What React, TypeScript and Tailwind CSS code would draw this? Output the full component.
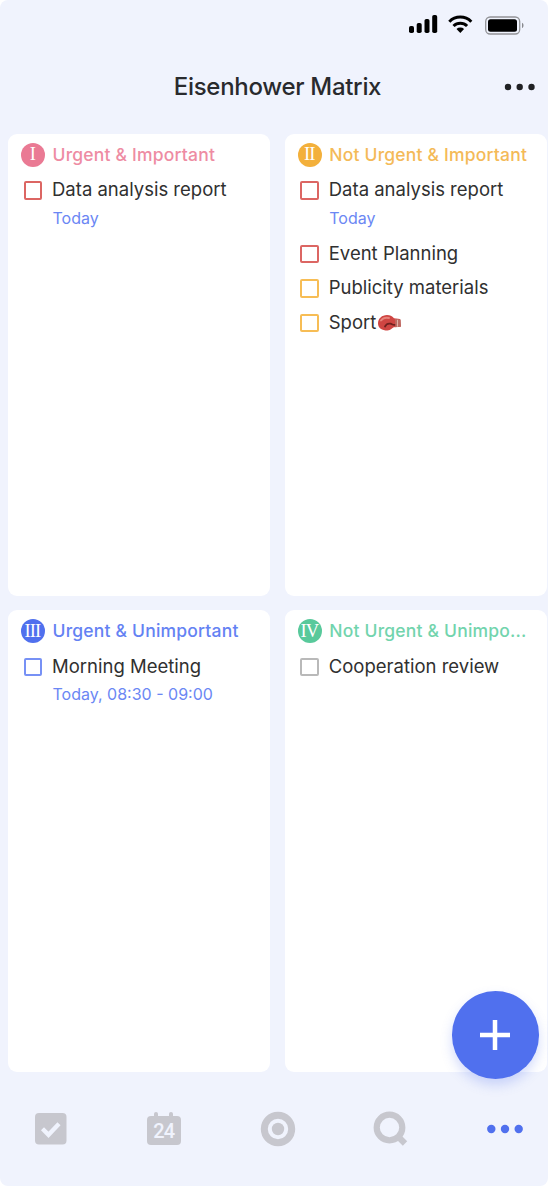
interface Task {
  title: string
  date?: string
  box: string
  glove?: boolean
}

interface Quadrant {
  numeral: string
  title: string
  badge: string
  text: string
  tasks: Task[]
}

const quadrants: Quadrant[] = [
  {
    numeral: 'I',
    title: 'Urgent & Important',
    badge: 'bg-[#ea7a94]',
    text: 'text-[#ee8ca3]',
    tasks: [
      { title: 'Data analysis report', date: 'Today', box: 'border-[#dc6663]' },
    ],
  },
  {
    numeral: 'II',
    title: 'Not Urgent & Important',
    badge: 'bg-[#f3b03b]',
    text: 'text-[#f4ba58]',
    tasks: [
      { title: 'Data analysis report', date: 'Today', box: 'border-[#dc6663]' },
      { title: 'Event Planning', box: 'border-[#dc6663]' },
      { title: 'Publicity materials', box: 'border-[#f7bd55]' },
      { title: 'Sport', box: 'border-[#f7bd55]', glove: true },
    ],
  },
  {
    numeral: 'III',
    title: 'Urgent & Unimportant',
    badge: 'bg-[#5070ee]',
    text: 'text-[#6482f3]',
    tasks: [
      {
        title: 'Morning Meeting',
        date: 'Today, 08:30 - 09:00',
        box: 'border-[#7791f5]',
      },
    ],
  },
  {
    numeral: 'IV',
    title: 'Not Urgent & Unimpo...',
    badge: 'bg-[#58c99b]',
    text: 'text-[#72d4ad]',
    tasks: [{ title: 'Cooperation review', box: 'border-[#b9b9b9]' }],
  },
]

function Glove() {
  return (
    <svg width="25" height="18" viewBox="0 0 25 18" className="ml-px shrink-0">
      <path
        d="M1 9.5C1 4.5 5 1 10 1c3 0 5 1.200 7 3.200l6 .8.8 7.500-6.800.8c-2 .5-3 3.200-6.500 3.200C5 16.500 1 14 1 9.500Z"
        fill="#cf4542"
      />
      <path d="M18 5l5.700.5.3 7.300-5.800.5Z" fill="#bd6a62" />
      <path d="M20.500 5.800v6.900" stroke="#dfb2a8" strokeWidth="1" />
      <path
        d="M8 12.500c1.200-2.300 3-3.300 5.500-2.800 1.500.4 2.500 1.300 4 1.100"
        fill="none"
        stroke="#70211f"
        strokeWidth="1.800"
        strokeLinecap="round"
      />
      <path
        d="M4 6.500C6 4 9 3.200 12 4"
        fill="none"
        stroke="#e7847b"
        strokeWidth="2"
        strokeLinecap="round"
      />
    </svg>
  )
}

function StatusBar() {
  return (
    <div className="flex h-12 items-center justify-end pt-px pr-6">
      <svg width="116" height="22" viewBox="0 0 116 22">
        <rect x="1" y="12" width="5" height="7" rx="1.800" />
        <rect x="8.700" y="9" width="5" height="10" rx="1.800" />
        <rect x="16.500" y="5" width="5" height="14" rx="1.800" />
        <rect x="24.200" y="1" width="5" height="18" rx="1.800" />
        <g fill="none" stroke="#000" strokeWidth="3">
          <path d="M41.300 7.700a15.500 15.500 0 0 1 22 0" />
          <path d="M45.500 12a9.600 9.600 0 0 1 13.600 0" />
        </g>
        <path d="M48.500 15a5.600 5.600 0 0 1 7.600 0l-3.800 4Z" />
        <rect
          x="77.700"
          y="3"
          width="34"
          height="17"
          rx="4.500"
          fill="none"
          stroke="#929397"
          strokeWidth="1.300"
        />
        <rect x="80" y="5.200" width="29" height="12.600" rx="2.500" />
        <path d="M114 8.700c2 .8 2 4.500 0 5.300Z" fill="#88898e" />
      </svg>
    </div>
  )
}

function TaskRow({ task }: { task: Task }) {
  return (
    <div>
      <div className="flex h-[34.5px] items-center pl-[15.5px]">
        <span
          className={`size-[18.500px] shrink-0 rounded-[2px] border-2 ${task.box}`}
        />
        <span className="ml-[10px] text-[18.500px] whitespace-nowrap text-[#303030]">
          {task.title}
        </span>
        {task.glove && <Glove />}
      </div>
      {task.date && (
        <div className="h-[29px] pl-[44.5px] text-[16px] leading-[21px] text-[#6b87f4]">
          {task.date}
        </div>
      )}
    </div>
  )
}

function QuadrantCard({ quadrant }: { quadrant: Quadrant }) {
  return (
    <section className="min-w-0 rounded-[9px] bg-white pt-[9px]">
      <div className="mb-[6.5px] flex h-6 items-center pr-3 pl-[13px]">
        <span
          className={`flex size-6 shrink-0 items-center justify-center rounded-full pr-px font-['Liberation_Serif',serif] text-[18.500px] leading-none tracking-[-0.9px] text-white ${quadrant.badge}`}
        >
          {quadrant.numeral}
        </span>
        <h2
          className={`ml-[7.5px] text-[17.500px] leading-6 font-medium tracking-[0.2px] whitespace-nowrap ${quadrant.text}`}
        >
          {quadrant.title}
        </h2>
      </div>
      {quadrant.tasks.map(task => (
        <TaskRow key={task.title} task={task} />
      ))}
    </section>
  )
}

function TabBar() {
  return (
    <nav className="flex h-[114px] items-center justify-between pr-[25px] pl-8">
      <svg width="36" height="36" viewBox="0 0 36 36">
        <rect x="3" y="2" width="31.500" height="31.500" rx="4" fill="#c7c7ce" />
        <path
          d="M10.500 17.800l6 6 10.500-11"
          fill="none"
          stroke="#f0f3fd"
          strokeWidth="4.300"
        />
      </svg>
      <div className="flex h-9 w-9 flex-col items-center">
        <div className="mt-px flex h-1 w-[19px] justify-between">
          <span className="w-1 rounded-t-full bg-[#c7c7ce]" />
          <span className="w-1 rounded-t-full bg-[#c7c7ce]" />
        </div>
        <div className="flex h-[29px] w-[33.500px] items-center justify-center rounded-[4px] bg-[#c7c7ce] font-[Roboto,sans-serif] text-[20px] leading-none font-medium tracking-[-0.8px] text-[#f0f3fd]">
          24
        </div>
      </div>
      <svg width="36" height="36" viewBox="0 0 36 36">
        <circle
          cx="18"
          cy="18"
          r="13.700"
          fill="none"
          stroke="#c7c7ce"
          strokeWidth="7"
        />
        <circle cx="18" cy="18" r="6.200" fill="#c7c7ce" />
      </svg>
      <svg width="36" height="36" viewBox="0 0 36 36">
        <g fill="none" stroke="#c7c7ce" strokeWidth="6.200">
          <circle cx="16.500" cy="16.500" r="12.800" />
          <path d="M25 25.500l7 7" />
        </g>
      </svg>
      <svg width="36" height="36" viewBox="0 0 36 36" fill="#5070ee">
        <circle cx="4.300" cy="18" r="4.200" />
        <circle cx="18" cy="18" r="4.200" />
        <circle cx="31.700" cy="18" r="4.200" />
      </svg>
    </nav>
  )
}

export default function App() {
  return (
    <div className="relative flex h-[1186px] w-[548px] flex-col overflow-hidden rounded-lg bg-[#f0f3fd] font-[Inter,sans-serif]">
      <StatusBar />
      <header className="grid h-[85.5px] grid-cols-[1fr_auto_1fr] items-center pr-3 pb-[7px] pl-[19px]">
        <h1 className="col-start-2 text-[24px] font-medium tracking-[-0.3px] whitespace-nowrap text-[#292a2d]">
          Eisenhower Matrix
        </h1>
        <svg
          width="32"
          height="8"
          viewBox="0 0 32 8"
          fill="#202124"
          className="justify-self-end"
        >
          <circle cx="4" cy="4" r="3.200" />
          <circle cx="15.700" cy="4" r="3.200" />
          <circle cx="27.500" cy="4" r="3.200" />
        </svg>
      </header>
      <main className="grid h-[938.5px] grid-cols-2 grid-rows-2 gap-[14.5px] pr-px pl-2">
        {quadrants.map(quadrant => (
          <QuadrantCard key={quadrant.numeral} quadrant={quadrant} />
        ))}
      </main>
      <TabBar />
      <button className="absolute right-[9px] bottom-[107.5px] flex size-[87.5px] items-center justify-center rounded-full bg-[#5070ee] shadow-[0_6px_12px_rgba(80,112,238,0.25)]">
        <svg width="30" height="30" viewBox="0 0 30 30">
          <path d="M15 0v30M0 15h30" stroke="#fff" strokeWidth="4.500" />
        </svg>
      </button>
    </div>
  )
}
